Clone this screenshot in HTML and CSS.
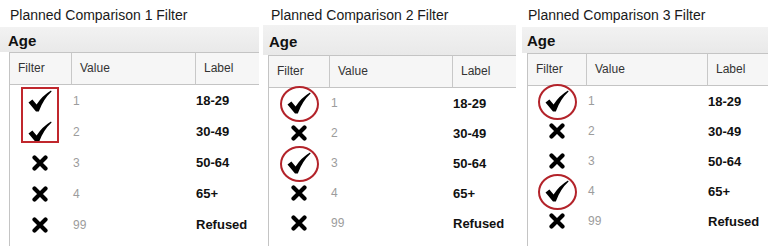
FILE: index.html
```html
<!DOCTYPE html>
<html lang="en">
<head>
    <meta charset="UTF-8">
    <title>Planned Comparison Filters</title>
    <link rel="stylesheet" href="styles.css">
</head>
<body>
    <svg class="defs" width="0" height="0">
        <defs>
            <path id="tick" d="M0.5 12.5 L4.4 9.6 L8.6 14.6 Q14 6 23 0.6 L23.6 1.6 Q15.5 9 10.8 21.4 L8 21.4 Z"/>
            <g id="cross">
                <path d="M2.5 2.5 L13.5 13.5 M13.5 2.5 L2.5 13.5" stroke="#000" stroke-width="4.2" stroke-linecap="round"/>
            </g>
        </defs>
    </svg>

    <div class="strip">
        <section class="panel p1">
            <h2 class="title">Planned Comparison 1 Filter</h2>
            <div class="box">
                <div class="var">Age</div>
                <div class="grid">
                    <div class="th">Filter</div>
                    <div class="th">Value</div>
                    <div class="th">Label</div>

                    <div class="mark"><svg class="tick" viewBox="0 0 24 22"><use href="#tick"/></svg></div>
                    <div class="val">1</div>
                    <div class="lbl">18-29</div>

                    <div class="mark"><svg class="tick" viewBox="0 0 24 22"><use href="#tick"/></svg></div>
                    <div class="val">2</div>
                    <div class="lbl">30-49</div>

                    <div class="mark"><svg class="cross" viewBox="0 0 16 16"><use href="#cross"/></svg></div>
                    <div class="val">3</div>
                    <div class="lbl">50-64</div>

                    <div class="mark"><svg class="cross" viewBox="0 0 16 16"><use href="#cross"/></svg></div>
                    <div class="val">4</div>
                    <div class="lbl">65+</div>

                    <div class="mark"><svg class="cross" viewBox="0 0 16 16"><use href="#cross"/></svg></div>
                    <div class="val">99</div>
                    <div class="lbl">Refused</div>

                    <div class="boxed"></div>
                </div>
            </div>
        </section>

        <section class="panel p2">
            <h2 class="title">Planned Comparison 2 Filter</h2>
            <div class="box">
                <div class="var">Age</div>
                <div class="grid">
                    <div class="th">Filter</div>
                    <div class="th">Value</div>
                    <div class="th">Label</div>

                    <div class="mark ring"><svg class="tick" viewBox="0 0 24 22"><use href="#tick"/></svg></div>
                    <div class="val">1</div>
                    <div class="lbl">18-29</div>

                    <div class="mark"><svg class="cross" viewBox="0 0 16 16"><use href="#cross"/></svg></div>
                    <div class="val">2</div>
                    <div class="lbl">30-49</div>

                    <div class="mark ring"><svg class="tick" viewBox="0 0 24 22"><use href="#tick"/></svg></div>
                    <div class="val">3</div>
                    <div class="lbl">50-64</div>

                    <div class="mark"><svg class="cross" viewBox="0 0 16 16"><use href="#cross"/></svg></div>
                    <div class="val">4</div>
                    <div class="lbl">65+</div>

                    <div class="mark"><svg class="cross" viewBox="0 0 16 16"><use href="#cross"/></svg></div>
                    <div class="val">99</div>
                    <div class="lbl">Refused</div>
                </div>
            </div>
        </section>

        <section class="panel p3">
            <h2 class="title">Planned Comparison 3 Filter</h2>
            <div class="box">
                <div class="var">Age</div>
                <div class="grid">
                    <div class="th">Filter</div>
                    <div class="th">Value</div>
                    <div class="th">Label</div>

                    <div class="mark ring"><svg class="tick" viewBox="0 0 24 22"><use href="#tick"/></svg></div>
                    <div class="val">1</div>
                    <div class="lbl">18-29</div>

                    <div class="mark"><svg class="cross" viewBox="0 0 16 16"><use href="#cross"/></svg></div>
                    <div class="val">2</div>
                    <div class="lbl">30-49</div>

                    <div class="mark"><svg class="cross" viewBox="0 0 16 16"><use href="#cross"/></svg></div>
                    <div class="val">3</div>
                    <div class="lbl">50-64</div>

                    <div class="mark ring"><svg class="tick" viewBox="0 0 24 22"><use href="#tick"/></svg></div>
                    <div class="val">4</div>
                    <div class="lbl">65+</div>

                    <div class="mark"><svg class="cross" viewBox="0 0 16 16"><use href="#cross"/></svg></div>
                    <div class="val">99</div>
                    <div class="lbl">Refused</div>
                </div>
            </div>
        </section>
    </div>
</body>
</html>
```

FILE: styles.css
```css
body {
    margin: 0;
    background: #fff;
    font-family: "Liberation Sans", Arial, sans-serif;
    color: #222;
    overflow: hidden;
}

.defs {
    position: absolute;
}

.strip {
    display: flex;
    height: 246px;
}

.panel {
    display: flex;
    flex-direction: column;
}

.p1 {
    width: 259px;
}

.p2 {
    width: 253px;
    margin-left: 4px;
}

.p3 {
    width: 246px;
    margin-left: 6px;
}

.title {
    margin: 0;
    height: 27px;
    padding-left: 10px;
    font-size: 14px;
    font-weight: normal;
    line-height: 30px;
    color: #1a1a1a;
}

.p2 .title {
    padding-left: 8px;
    height: 25px;
}

.p3 .title {
    padding-left: 6px;
}

.box {
    flex: 1;
    display: flex;
    flex-direction: column;
}

.var {
    height: 25px;
    padding-left: 8px;
    background: linear-gradient(#f2f2f2, #e9e9e9);
    font-size: 15px;
    font-weight: bold;
    line-height: 27px;
    color: #111;
}

.p2 .var {
    height: 30px;
    padding-left: 6px;
    line-height: 34px;
}

.p3 .var {
    height: 26px;
    padding-left: 5px;
    line-height: 27px;
}

.grid {
    flex: 1;
    display: grid;
    margin-left: 9px;
    padding-top: 2px;
    border-left: 1px solid #c4c4c4;
    font-size: 12px;
    position: relative;
}

.p1 .grid {
    grid-template-columns: 62px 124px 1fr;
    grid-template-rows: 31px repeat(5, 31px);
}

.p2 .grid {
    margin-left: 5px;
    grid-template-columns: 61px 123px 1fr;
    grid-template-rows: 31px repeat(5, 30px);
}

.p3 .grid {
    margin-left: 5px;
    grid-template-columns: 59px 121px 1fr;
    grid-template-rows: 31px repeat(5, 30px);
}

.th {
    background: #f6f6f6;
    border-top: 1px solid #c4c4c4;
    border-bottom: 1px solid #c4c4c4;
    border-right: 1px solid #c8c8c8;
    padding-left: 8px;
    line-height: 31px;
    color: #333;
    margin-top: -2px;
}

.th:nth-child(3) {
    border-right: none;
}

.mark {
    display: flex;
    align-items: center;
    justify-content: center;
    position: relative;
}

.tick {
    width: 24px;
    height: 22px;
    fill: #000;
    margin-right: 2px;
}

.cross {
    width: 16px;
    height: 16px;
    margin-right: 2px;
}

.ring::after {
    content: "";
    position: absolute;
    left: 50%;
    top: 50%;
    width: 35px;
    height: 32px;
    margin-left: -20px;
    margin-top: -17px;
    border: 2px solid #b3232a;
    border-radius: 50%;
}

.val {
    display: flex;
    align-items: center;
    padding-left: 1px;
    color: #9c9c9c;
}

.lbl {
    display: flex;
    align-items: center;
    font-size: 13px;
    font-weight: bold;
    color: #111;
}

/* red frame drawn over the two ticked rows of the first table */
.boxed {
    position: absolute;
    left: 11px;
    top: 35px;
    width: 34px;
    height: 52px;
    border: 2px solid #c0272d;
}
```
